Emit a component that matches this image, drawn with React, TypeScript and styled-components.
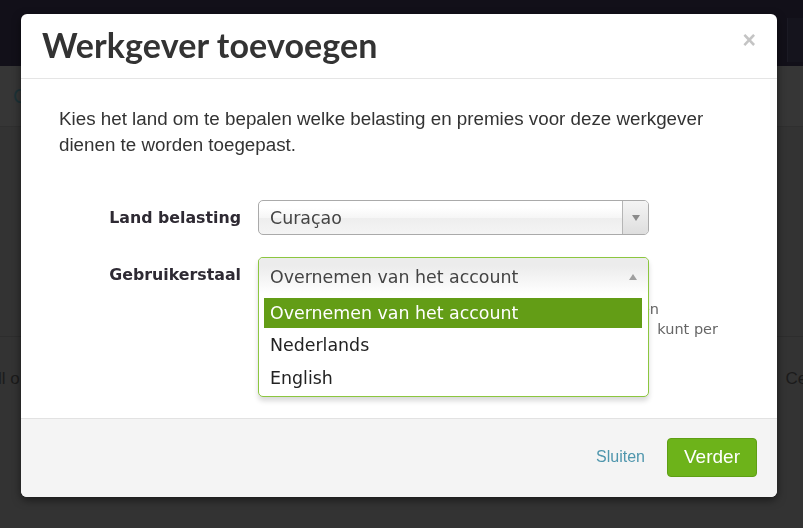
import React from "react";
import styled, { createGlobalStyle } from "styled-components";

const GlobalStyle = createGlobalStyle`
  html, body {
    margin: 0;
    padding: 0;
    background: #333;
    overflow: hidden;
  }
  * {
    box-sizing: border-box;
  }
`;

/* ---------- page behind the overlay ---------- */

const Page = styled.div`
  width: 803px;
  height: 528px;
  background: #333;
  font-family: "Liberation Sans", Arial, sans-serif;
  overflow: hidden;
`;

const TopBar = styled.div`
  height: 66px;
  background: #121019;
  display: flex;
  justify-content: flex-end;
  padding: 18px 0 4px;
`;

const TopBarBlock = styled.div`
  width: 16px;
  border-left: 1px solid #1b1a24;
  background: #15141d;
`;

const SubBar = styled.div`
  height: 61px;
  background: #363636;
  border-bottom: 1px solid #2f2f2f;
  display: flex;
  align-items: center;
  padding-left: 13px;
  color: #1d3236;
  font-size: 20px;
`;

const Section = styled.div`
  height: 210px;
  border-bottom: 1px solid #2d2d2d;
`;

const FaintRow = styled.div`
  display: flex;
  justify-content: space-between;
  padding-top: 32px;
  color: #1b1b1b;
  font-size: 17px;
  margin-left: -2px;
  margin-right: -8px;
`;

/* ---------- modal ---------- */

const Overlay = styled.div`
  position: fixed;
  inset: 0;
  padding: 14px 0 0 21px;
`;

const Modal = styled.div`
  width: 756px;
  height: 483px;
  background: #fff;
  border-radius: 6px;
  box-shadow: 0 3px 9px rgba(0, 0, 0, 0.5);
  display: flex;
  flex-direction: column;
`;

const Header = styled.div`
  height: 65px;
  border-bottom: 1px solid #e5e5e5;
  display: flex;
  align-items: center;
  justify-content: space-between;
  padding: 0 20px 3px 21px;
`;

const Title = styled.h3`
  margin: 0;
  font-family: Lato, "Open Sans", sans-serif;
  font-weight: 700;
  font-size: 34px;
  letter-spacing: 0.1px;
  color: #333;
`;

const Close = styled.span`
  font-family: "Liberation Sans", Arial, sans-serif;
  font-weight: 700;
  font-size: 23px;
  color: #c4c4c4;
  margin-bottom: 8px;
  margin-right: 1px;
`;

const Body = styled.div`
  flex: 1;
  padding: 27px 38px 0;
`;

const Intro = styled.p`
  margin: 0 0 42px;
  font-family: "Liberation Sans", Arial, sans-serif;
  font-size: 18.8px;
  line-height: 26px;
  color: #333;
`;

const Form = styled.div`
  display: grid;
  grid-template-columns: 182px 470px;
  column-gap: 17px;
  row-gap: 22px;
  align-items: start;
`;

const Label = styled.label`
  font-family: "DejaVu Sans", Verdana, sans-serif;
  font-weight: 700;
  font-size: 15.8px;
  color: #2e2a33;
  text-align: right;
  line-height: 35px;
`;

const Field = styled.div`
  position: relative;
`;

const SelectBox = styled.div<{ $open?: boolean }>`
  width: 391px;
  height: 35px;
  display: flex;
  align-items: center;
  justify-content: space-between;
  border: 1px solid ${({ $open }) => ($open ? "#8cc63f" : "#aaa")};
  border-radius: 5px;
  background: ${({ $open }) =>
    $open
      ? "linear-gradient(#ececec 20%, #fff 90%)"
      : "linear-gradient(#fff 20%, #f6f6f6 50%, #eee 52%, #f4f4f4 100%)"};
  font-family: "DejaVu Sans", Verdana, sans-serif;
  font-size: 17.4px;
  color: #444;
  padding-left: 11px;
`;

const ArrowBox = styled.div`
  width: 26px;
  height: 100%;
  border-left: 1px solid #b5b5b5;
  background: linear-gradient(#f4f4f4, #dedede);
  border-radius: 0 4px 4px 0;
  display: flex;
  align-items: center;
  justify-content: center;
`;

const TriangleDown = styled.span`
  width: 0;
  height: 0;
  border-left: 4px solid transparent;
  border-right: 4px solid transparent;
  border-top: 6px solid #8a8a8a;
`;

const TriangleUp = styled.span`
  width: 0;
  height: 0;
  border-left: 4px solid transparent;
  border-right: 4px solid transparent;
  border-bottom: 6px solid #a0a0a0;
  margin-right: 11px;
`;

const Help = styled.div`
  font-family: "DejaVu Sans", Verdana, sans-serif;
  font-size: 14.5px;
  line-height: 20px;
  color: #666;
  margin-top: 7px;
`;

/* each help line ends at a fixed width; the start runs under the open list */
const HelpLine = styled.div<{ $width: number }>`
  width: ${({ $width }) => $width}px;
  display: flex;
  justify-content: flex-end;
  white-space: pre;
  overflow: hidden;
`;

const Dropdown = styled.div`
  position: absolute;
  top: 0;
  left: 0;
  width: 391px;
  height: 140px;
  background: #fff;
  border: 1px solid #8cc63f;
  border-radius: 5px;
  box-shadow: 0 4px 5px rgba(0, 0, 0, 0.15);
  overflow: hidden;
`;

const DropHead = styled(SelectBox)`
  border: none;
  border-radius: 0;
  height: 40px;
  width: 100%;
  padding-bottom: 3px;
`;

const Options = styled.ul`
  list-style: none;
  margin: 0;
  padding: 0 6px 0 5px;
`;

const Option = styled.li<{ $active?: boolean }>`
  height: ${({ $active }) => ($active ? "30px" : "33px")};
  padding: 0 6px;
  display: flex;
  align-items: center;
  font-family: "DejaVu Sans", Verdana, sans-serif;
  font-size: 17.4px;
  color: ${({ $active }) => ($active ? "#fff" : "#222")};
  background: ${({ $active }) => ($active ? "#639d16" : "transparent")};
`;

const Footer = styled.div`
  height: 79px;
  border-top: 1px solid #e2e2e2;
  background: #f4f4f4;
  border-radius: 0 0 6px 6px;
  display: flex;
  align-items: center;
  justify-content: flex-end;
  gap: 22px;
  padding: 0 20px 2px;
`;

const LinkButton = styled.a`
  font-family: "Liberation Sans", Arial, sans-serif;
  font-size: 16px;
  color: #4f96ad;
  text-decoration: none;
  cursor: pointer;
`;

const PrimaryButton = styled.button`
  width: 90px;
  height: 39px;
  border: 1px solid #5e9f14;
  border-radius: 4px;
  background: #6db31a;
  color: #fff;
  font-family: "Liberation Sans", Arial, sans-serif;
  font-size: 19px;
  padding: 0;
  cursor: pointer;
`;

export default function App() {
  return (
    <>
      <GlobalStyle />
      <Page>
        <TopBar>
          <TopBarBlock />
        </TopBar>
        <SubBar>G</SubBar>
        <Section />
        <FaintRow>
          <span>ll o</span>
          <span>Cel</span>
        </FaintRow>
      </Page>
      <Overlay>
        <Modal>
          <Header>
            <Title>Werkgever toevoegen</Title>
            <Close>×</Close>
          </Header>
          <Body>
            <Intro>
              Kies het land om te bepalen welke belasting en premies voor deze werkgever
              <br />
              dienen te worden toegepast.
            </Intro>
            <Form>
              <Label>Land belasting</Label>
              <Field>
                <SelectBox>
                  <span>Curaçao</span>
                  <ArrowBox>
                    <TriangleDown />
                  </ArrowBox>
                </SelectBox>
              </Field>
              <Label>Gebruikerstaal</Label>
              <Field>
                <SelectBox $open>
                  <span>Overnemen van het account</span>
                </SelectBox>
                <Help>
                  <HelpLine $width={401}>Deze taal wordt gebruikt voor e-mails en documenten</HelpLine>
                  <HelpLine $width={460}>{"van de werkgever en de medewerkers. U   kunt per"}</HelpLine>
                </Help>
                <Dropdown>
                  <DropHead $open>
                    <span>Overnemen van het account</span>
                    <TriangleUp />
                  </DropHead>
                  <Options>
                    <Option $active>Overnemen van het account</Option>
                    <Option>Nederlands</Option>
                    <Option>English</Option>
                  </Options>
                </Dropdown>
              </Field>
            </Form>
          </Body>
          <Footer>
            <LinkButton>Sluiten</LinkButton>
            <PrimaryButton>Verder</PrimaryButton>
          </Footer>
        </Modal>
      </Overlay>
    </>
  );
}
